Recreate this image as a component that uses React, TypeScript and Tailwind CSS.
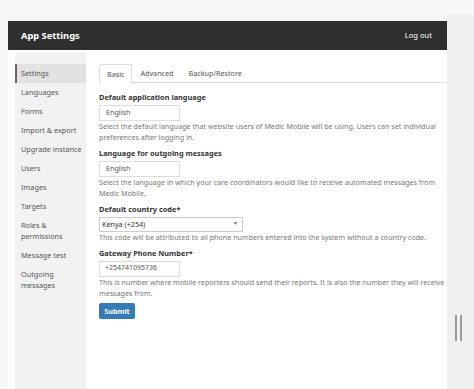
import React from "react";

const items: string[][] = [
  ["Settings"],
  ["Languages"],
  ["Forms"],
  ["Import & export"],
  ["Upgrade instance"],
  ["Users"],
  ["Images"],
  ["Targets"],
  ["Roles &", "permissions"],
  ["Message test"],
  ["Outgoing", "messages"],
];

function Field({ label, children, help, mt }: { label: string; children: React.ReactNode; help: string[]; mt: string }) {
  return (
    <div className={mt}>
      <div className="text-[7.4px] leading-[11px] font-bold text-[#333]">{label}</div>
      <div className="mt-[1.5px]">{children}</div>
      <div className="mt-[0.5px] text-[7.15px] leading-[11px] text-[#777]">
        {help.map((h, i) => (
          <div key={i} className="whitespace-nowrap">{h}</div>
        ))}
      </div>
    </div>
  );
}

export default function App() {
  return (
    <div
      className="w-[474px] h-[389px] overflow-hidden bg-[#f7f7f7] flex"
      style={{ fontFamily: '"Noto Sans", "Open Sans", sans-serif' }}
    >
      <div className="w-[8px] shrink-0" />
      <div className="w-[439px] shrink-0 flex flex-col pt-[21px]">
        <div className="h-[29px] bg-[#2f2f2f] flex items-center justify-between pl-[13px] pr-[15px]">
          <span className="text-white font-bold text-[9.3px]">App Settings</span>
          <span className="text-white text-[7.6px]">Log out</span>
        </div>
        <div className="flex-1 bg-white flex pl-[7px] pt-[2px]">
          <div className="w-[71px] bg-[#f2f2f2] pt-[12px] shrink-0">
            {items.map((it, i) => (
              <div
                key={i}
                className={
                  "border-l-2 pl-[4px] py-[4px] text-[7.3px] leading-[11px] text-[#555] " +
                  (i === 0 ? "border-[#666] bg-[#e2e2e2]" : "border-transparent")
                }
              >
                {it.map((l, j) => (
                  <div key={j} className="whitespace-nowrap">{l}</div>
                ))}
              </div>
            ))}
          </div>
          <div className="flex-1 pl-[13px] pt-[12px] overflow-hidden">
            <div className="flex border-b border-[#ddd] h-[19px] text-[7.2px] text-[#555]">
              <div className="px-[7px] flex items-center border border-b-0 border-[#ddd] bg-white rounded-t-[2px] -mb-px">Basic</div>
              <div className="px-[8px] flex items-center">Advanced</div>
              <div className="px-[7px] flex items-center">Backup/Restore</div>
            </div>
            <Field
              mt="mt-[9px]"
              label="Default application language"
              help={[
                "Select the default language that website users of Medic Mobile will be using. Users can set individual",
                "preferences after logging in.",
              ]}
            >
              <div className="w-[81px] h-[16px] border border-[#ddd] flex items-center pl-[6px] text-[7.2px] text-[#555]">English</div>
            </Field>
            <Field
              mt="mt-[5px]"
              label="Language for outgoing messages"
              help={[
                "Select the language in which your care coordinators would like to receive automated messages from",
                "Medic Mobile.",
              ]}
            >
              <div className="w-[81px] h-[16px] border border-[#ddd] flex items-center pl-[6px] text-[7.2px] text-[#555]">English</div>
            </Field>
            <Field
              mt="mt-[5px]"
              label="Default country code*"
              help={["This code will be attributed to all phone numbers entered into the system without a country code."]}
            >
              <div className="w-[144px] h-[15px] border border-[#ccc] flex items-center justify-between pl-[2px] pr-[4px] text-[7.2px] text-[#333]">
                <span>Kenya (+254)</span>
                <span className="text-[5px] text-[#666]">▼</span>
              </div>
            </Field>
            <Field
              mt="mt-[5px]"
              label="Gateway Phone Number*"
              help={[
                "This is number where mobile reporters should send their reports. It is also the number they will receive",
                "messages from.",
              ]}
            >
              <div className="w-[81px] h-[16px] border border-[#ddd] flex items-center pl-[5px] text-[7px] text-[#555]">+254741095736</div>
            </Field>
            <div className="mt-[4px] w-[36px] h-[16px] bg-[#337ab7] rounded-[2px] flex items-center justify-center text-white font-bold text-[7.2px]">
              Submit
            </div>
          </div>
        </div>
      </div>
      <div className="flex-1 pt-[14px] flex flex-col">
        <div className="flex-1 bg-[#f0f0f0] relative">
          <div className="absolute left-[8px] top-[301px] flex gap-[3px]">
            <div className="w-[2px] h-[26px] bg-[#999]" />
            <div className="w-[2px] h-[26px] bg-[#999]" />
          </div>
        </div>
      </div>
    </div>
  );
}
